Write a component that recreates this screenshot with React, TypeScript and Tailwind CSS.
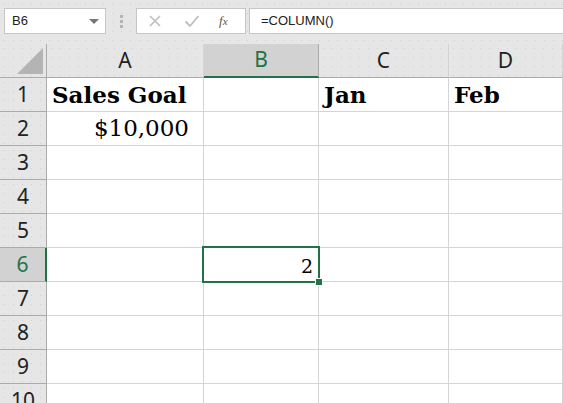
import React from "react";

const dots =
  "bg-[radial-gradient(circle,#d0d0d0_0.8px,transparent_1px)] bg-[size:9px_9px]";

const rows: { a?: React.ReactNode; b?: React.ReactNode; c?: React.ReactNode; d?: React.ReactNode }[] = [
  { a: <span className="font-bold">Sales Goal</span>, c: <span className="font-bold">Jan</span>, d: <span className="font-bold">Feb</span> },
  { a: <span className="block text-right pr-[14px]">$10,000</span> },
  {},
  {},
  {},
  { b: <span className="block text-right pr-[5px] text-[19px] pt-[4px]">2</span> },
  {},
  {},
  {},
  {},
];

const cols = ["A", "B", "C", "D"];

export default function App() {
  return (
    <div className="w-[563px] h-[403px] overflow-hidden bg-[#e6e6e6] font-['Noto_Sans',sans-serif]">
      {/* formula bar */}
      <div className={`h-[44px] flex items-start pt-[8px] pl-[4px] ${dots}`}>
        <div className="w-[102px] h-[26px] bg-white border border-[#c6c6c6] flex items-center justify-between pl-[7px] pr-[6px]">
          <span className="text-[13px] text-[#222] font-['Liberation_Sans',sans-serif]">B6</span>
          <span className="w-0 h-0 border-l-[5px] border-r-[5px] border-t-[5px] border-l-transparent border-r-transparent border-t-[#777] mt-[1px]" />
        </div>
        <div className="w-[30px] h-[26px] flex flex-col items-center justify-center gap-[2px]">
          <span className="w-[3px] h-[3px] bg-[#b4b4b4]" />
          <span className="w-[3px] h-[3px] bg-[#b4b4b4]" />
          <span className="w-[3px] h-[3px] bg-[#b4b4b4]" />
        </div>
        <div className="w-[110px] h-[26px] bg-white border border-[#c6c6c6] flex items-center">
          <svg width="14" height="14" viewBox="0 0 14 14" className="ml-[11px]">
            <path d="M2 2 L12 12 M12 2 L2 12" stroke="#bdbdbd" strokeWidth="1.6" />
          </svg>
          <svg width="16" height="14" viewBox="0 0 16 14" className="ml-[22px]">
            <path d="M1.5 7.5 L6 12 L14.5 2" stroke="#bdbdbd" strokeWidth="1.8" fill="none" />
          </svg>
          <span className="ml-[19px] text-[13px] italic text-[#555] font-['Liberation_Serif',serif]">
            f<span className="text-[11px]">x</span>
          </span>
        </div>
        <div className="ml-[3px] flex-1 h-[26px] bg-white border border-[#c6c6c6] border-r-0 flex items-center pl-[11px]">
          <span className="text-[13px] text-[#222] font-['Liberation_Sans',sans-serif]">=COLUMN()</span>
        </div>
      </div>

      {/* grid */}
      <div className="grid grid-cols-[47px_157px_115px_130px_1fr] bg-white">
        {/* header row */}
        <div className={`h-[34px] bg-[#e6e6e6] border-r border-b border-[#ababab] flex items-end justify-end pr-[3px] pb-[3px] ${dots}`}>
          <svg width="26" height="26" viewBox="0 0 26 26">
            <path d="M26 0 L26 26 L0 26 Z" fill="#b4b4b4" />
          </svg>
        </div>
        {cols.map((c) =>
          c === "B" ? (
            <div
              key={c}
              className="h-[34px] bg-[#d2d2d2] border-r border-[#ababab] border-b-2 border-b-[#217346] flex items-center justify-center text-[21px] text-[#217346]"
            >
              {c}
            </div>
          ) : (
            <div
              key={c}
              className={`h-[34px] bg-[#e6e6e6] border-r border-b border-[#ababab] border-r-[#d4d4d4] flex items-center justify-center text-[21px] text-[#222] ${dots}`}
            >
              {c}
            </div>
          )
        )}

        {rows.map((r, i) => {
          const n = i + 1;
          const sel = n === 6;
          return (
            <React.Fragment key={n}>
              <div
                className={
                  sel
                    ? "h-[34px] bg-[#d2d2d2] border-b border-[#ababab] border-r-2 border-r-[#217346] flex items-center justify-center text-[21px] text-[#217346]"
                    : `h-[34px] bg-[#e6e6e6] border-r border-b border-[#ababab] flex items-center justify-center text-[21px] text-[#222] ${dots}`
                }
              >
                {n}
              </div>
              {(["a", "b", "c", "d"] as const).map((k) => (
                <div
                  key={k}
                  className="relative h-[34px] border-r border-b border-[#d4d4d4] flex items-center pl-[5px] text-[23px] text-black font-['DejaVu_Serif',serif] leading-none"
                >
                  {sel && k === "b" && (
                    <>
                      <div className="absolute z-10 left-[-2px] top-[-2px] right-[-2px] bottom-[-2px] border-2 border-[#217346] pointer-events-none" />
                      <div className="absolute z-20 right-[-5px] bottom-[-5px] w-[8px] h-[8px] bg-[#217346] border border-white" />
                    </>
                  )}
                  <div className="flex-1 min-w-0 whitespace-nowrap">{r[k]}</div>
                </div>
              ))}
            </React.Fragment>
          );
        })}
      </div>
    </div>
  );
}
